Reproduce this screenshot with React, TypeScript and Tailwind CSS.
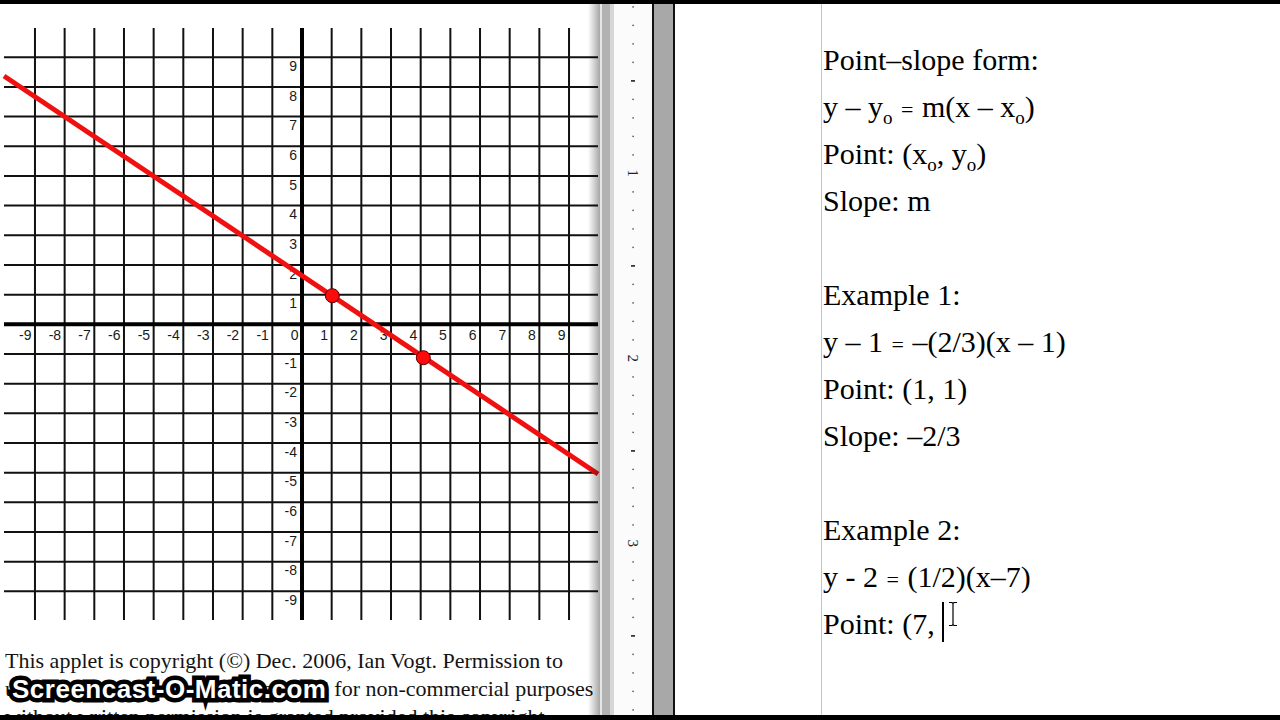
import React from "react";

const S = 29.67;
const OX = 302;
const OY = 324.3;
const KS = Array.from({ length: 19 }, (_, i) => i - 9);

function Graph() {
  return (
    <svg width={600} height={636} viewBox="0 4 600 636" className="block shrink-0">
      <rect x={0} y={4} width={600} height={636} fill="#ffffff" />
      {KS.filter((k) => k !== 0).map((k) => (
        <line key={"v" + k} x1={OX + k * S} y1={28} x2={OX + k * S} y2={620} stroke="#111" strokeWidth={2} />
      ))}
      {KS.filter((k) => k !== 0).map((k) => (
        <line key={"h" + k} x1={4} y1={OY - k * S} x2={598} y2={OY - k * S} stroke="#111" strokeWidth={2} />
      ))}
      <line x1={4} y1={OY} x2={598} y2={OY} stroke="#000" strokeWidth={4} />
      <line x1={OX} y1={28} x2={OX} y2={620} stroke="#000" strokeWidth={4} />
      <g fontFamily="'Liberation Sans', Arial, sans-serif" fontSize={14} fill="#1a1a1a">
        {KS.filter((k) => k !== 0).map((k) => (
          <text key={"yl" + k} x={OX - 5} y={OY - k * S + 13.6} textAnchor="end">
            {String(k)}
          </text>
        ))}
        {KS.map((k) => (
          <text key={"xl" + k} x={OX + k * S - 3.5} y={OY + 15.2} textAnchor="end">
            {String(k)}
          </text>
        ))}
      </g>
      <line x1={4} y1={76} x2={598} y2={474} stroke="#f01010" strokeWidth={5} />
      <circle cx={332.3} cy={295.7} r={7} fill="#ff0a0a" stroke="#5a0000" strokeWidth={1} />
      <circle cx={423.3} cy={357.7} r={7} fill="#ff0a0a" stroke="#5a0000" strokeWidth={1} />
    </svg>
  );
}

function Ruler() {
  const marks = Array.from({ length: 39 }, (_, i) => i - 9);
  return (
    <svg width={38} height={711} viewBox="0 0 38 711" className="block">
      {marks.map((k) => {
        const y = 173.3 + k * 18.5 - 4;
        if (k % 10 === 0) {
          return (
            <text
              key={k}
              x={19}
              y={y}
              fontFamily="'Liberation Serif', serif"
              fontSize={15}
              fill="#222"
              textAnchor="middle"
              dominantBaseline="central"
              transform={`rotate(90 19 ${y})`}
            >
              {String(k / 10 + 1)}
            </text>
          );
        }
        if (k % 5 === 0) {
          return <rect key={k} x={17} y={y - 0.7} width={4} height={1.6} fill="#222" />;
        }
        return <rect key={k} x={18.4} y={y - 0.6} width={1.4} height={1.4} fill="#444" />;
      })}
    </svg>
  );
}

function Sub({ children }: { children: React.ReactNode }) {
  return <span className="text-[19px] align-sub leading-none">{children}</span>;
}

function Eq() {
  return <span className="text-[22px] leading-none px-[1px]">=</span>;
}

export default function App() {
  return (
    <div className="w-[1280px] h-[720px] bg-black flex flex-col overflow-hidden">
      <div className="h-[4px] shrink-0" />
      <div className="relative flex h-[711px] shrink-0 bg-white">
        {/* left applet panel */}
        <div className="relative w-[600px] shrink-0 flex flex-col overflow-hidden bg-white">
          <Graph />
          <div className="mt-[7px] pl-[5px] pr-[8px] font-['Liberation_Serif',serif] text-[22px] leading-[28px] text-[#141414] whitespace-nowrap">
            <div>This applet is copyright (©) Dec. 2006, Ian Vogt. Permission to</div>
            <div>use and modify this applet is granted for non-commercial purposes</div>
            <div>without written permission is granted provided this copyright</div>
          </div>
          <div className="absolute right-0 top-0 bottom-0 w-[12px] bg-linear-to-r from-transparent to-black/35 pointer-events-none" />
          <div className="absolute left-[12px] top-[672px] font-['Liberation_Sans',Arial,sans-serif] font-bold text-[26px] leading-[27px] tracking-[0.5px] text-white whitespace-nowrap [paint-order:stroke_fill] [-webkit-text-stroke:9px_#000]">
            Screencast-O-Matic.com
          </div>
        </div>
        {/* splitter & ruler */}
        <div className="w-[2px] shrink-0 bg-[#e6e6e6]" />
        <div className="w-[8px] shrink-0 bg-[#b2b2b2]" />
        <div className="w-[4px] shrink-0 bg-[#d6d6d6]" />
        <div className="w-[38px] shrink-0 bg-[#fbfbfb]">
          <Ruler />
        </div>
        <div className="w-[23px] shrink-0 bg-[#a8a8a8] border-x-2 border-[#111]" />
        {/* document page */}
        <div className="flex-1 flex bg-white">
          <div className="w-[146px] shrink-0" />
          <div className="w-px shrink-0 bg-[#c4c4c4]" />
          <div className="pl-[1px] pt-[32px] font-['Liberation_Serif','Times_New_Roman',serif] text-[30px] leading-[47px] text-black whitespace-nowrap">
            <div>Point–slope form:</div>
            <div>
              y – y<Sub>o</Sub> <Eq /> m(x – x<Sub>o</Sub>)
            </div>
            <div>
              Point: (x<Sub>o</Sub>, y<Sub>o</Sub>)
            </div>
            <div>Slope: m</div>
            <div>&nbsp;</div>
            <div>Example 1:</div>
            <div>
              y – 1 <Eq /> –(2/3)(x – 1)
            </div>
            <div>Point: (1, 1)</div>
            <div>Slope: –2/3</div>
            <div>&nbsp;</div>
            <div>Example 2:</div>
            <div>
              y - 2 <Eq /> (1/2)(x–7)
            </div>
            <div>
              Point: (7, <span className="inline-block w-[2px] h-[40px] bg-black align-[-8px]" />
            </div>
          </div>
        </div>
        {/* mouse I-beam cursor */}
        <svg className="absolute left-[947px] top-[597px]" width={12} height={26} viewBox="0 0 12 26">
          <path d="M2 1.5h3l1 1 1-1h3M6 2.5v21M2 24.5h3l1-1 1 1h3" fill="none" stroke="#fff" strokeWidth={3} />
          <path d="M2 1.5h3l1 1 1-1h3M6 2.5v21M2 24.5h3l1-1 1 1h3" fill="none" stroke="#000" strokeWidth={1.2} />
        </svg>
      </div>
      <div className="h-[5px] shrink-0" />
    </div>
  );
}
